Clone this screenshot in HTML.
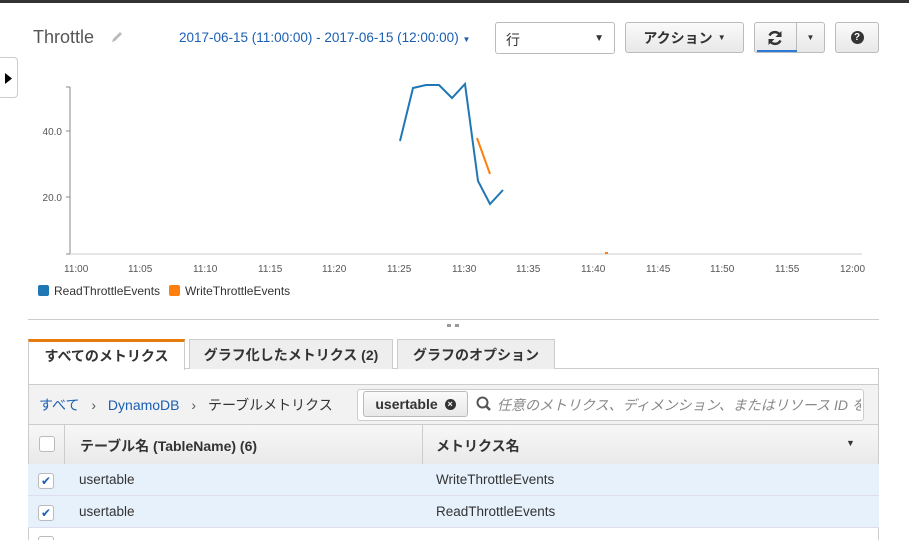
<!DOCTYPE html>
<html style="overflow:hidden;height:540px"><head><meta charset="utf-8"><style>
body{margin:0;width:909px;height:540px;overflow:hidden;background:#fff;font-family:"Liberation Sans","Noto Sans CJK JP",sans-serif;position:relative;color:#333}
.a{position:absolute}
.btn{position:absolute;border:1px solid #bbb;border-radius:3px;background:linear-gradient(#fafafa,#e8e8e8);box-sizing:border-box;font-size:14px;font-weight:bold;color:#333;display:flex;align-items:center;justify-content:center}
.tab{position:absolute;top:339px;height:30px;border:1px solid #ccc;border-bottom:none;background:#eee;box-sizing:border-box;font-size:14px;font-weight:bold;display:flex;align-items:center;justify-content:center;color:#333}
.row{position:absolute;left:28px;width:851px;height:32px;border-bottom:1px solid #dde;box-sizing:border-box;font-size:13.5px}
.cb{position:absolute;left:10px;width:14px;height:14px;border:1px solid #bbb;border-radius:3px;background:#fff}
</style></head><body>
<div class="a" style="left:0;top:0;width:909px;height:3px;background:#333"></div>
<div class="a" style="left:33px;top:27px;font-size:18px;color:#555">Throttle</div>
<svg class="a" style="left:110px;top:30px" width="14" height="14"><path d="M2 12 L3 9 L10 2 L12 4 L5 11 Z" fill="#bbb"/></svg>
<div class="a" style="left:179px;top:30px;font-size:13.5px;color:#1a5fb4">2017-06-15 (11:00:00) - 2017-06-15 (12:00:00) <span style="font-size:8px">▼</span></div>
<div class="a" style="left:495px;top:22px;width:120px;height:32px;border:1px solid #bbb;border-radius:3px;box-sizing:border-box;font-size:14px;padding:7px 10px">行<span style="float:right;font-size:10px;margin-top:3px">▼</span></div>
<div class="btn" style="left:625px;top:22px;width:119px;height:31px">アクション <span style="font-size:8px;margin-left:5px">▼</span></div>
<div class="btn" style="left:754px;top:22px;width:71px;height:31px;justify-content:flex-start"><span style="width:42px;display:flex;justify-content:center"><svg width="18" height="18" viewBox="0 0 18 18"><path d="M14 6 A6 6 0 0 0 3.5 6.5" fill="none" stroke="#333" stroke-width="2.5"/><path d="M15.5 2 L15.5 8 L9.5 8 Z" fill="#333"/><path d="M4 12 A6 6 0 0 0 14.5 11.5" fill="none" stroke="#333" stroke-width="2.5"/><path d="M2.5 16 L2.5 10 L8.5 10 Z" fill="#333"/></svg></span><span style="border-left:1px solid #bbb;height:29px;width:28px;display:flex;align-items:center;justify-content:center;font-size:8px">▼</span></div>
<div class="a" style="left:757px;top:50px;width:40px;height:2px;background:#2a7ad6"></div>
<div class="btn" style="left:835px;top:22px;width:44px;height:31px"><span style="width:13px;height:13px;border-radius:50%;background:#333;color:#fff;font-size:10px;line-height:13px;text-align:center">?</span></div>
<div class="a" style="left:-1px;top:57px;width:19px;height:41px;border:1px solid #ccc;border-radius:0 4px 4px 0;background:#fff;box-sizing:border-box"><svg class="a" style="left:5px;top:15px" width="8" height="11"><path d="M0 0 L7 5.5 L0 11 Z" fill="#000"/></svg></div>
<svg class="a" style="left:0;top:80px" width="909" height="190">
<line x1="70" y1="7" x2="70" y2="174" stroke="#888"/>
<line x1="66" y1="7" x2="70" y2="7" stroke="#888"/>
<line x1="66" y1="51" x2="70" y2="51" stroke="#888"/>
<line x1="66" y1="117" x2="70" y2="117" stroke="#888"/>
<line x1="66" y1="174" x2="70" y2="174" stroke="#888"/>
<line x1="70" y1="174" x2="862" y2="174" stroke="#ccc"/>
<text x="62" y="55" font-size="10" fill="#555" text-anchor="end" font-family="Liberation Sans">40.0</text>
<text x="62" y="121" font-size="10" fill="#555" text-anchor="end" font-family="Liberation Sans">20.0</text>
<polyline fill="none" stroke="#1f77b4" stroke-width="2" points="400,61 413,8 426,5 439,5 452,18 465,4 478,101 490,124 503,110"/>
<polyline fill="none" stroke="#ff7f0e" stroke-width="2" points="477,58 490,94"/>
<line x1="605" y1="173" x2="608" y2="173" stroke="#ff7f0e" stroke-width="2"/>
</svg>
<div class="a" style="left:56px;top:264px;width:810px;font-size:10px;color:#555">
<span class="a" style="left:8px">11:00</span><span class="a" style="left:72px">11:05</span><span class="a" style="left:137px">11:10</span><span class="a" style="left:202px">11:15</span><span class="a" style="left:266px">11:20</span><span class="a" style="left:331px">11:25</span><span class="a" style="left:396px">11:30</span><span class="a" style="left:460px">11:35</span><span class="a" style="left:525px">11:40</span><span class="a" style="left:590px">11:45</span><span class="a" style="left:654px">11:50</span><span class="a" style="left:719px">11:55</span><span class="a" style="left:784px">12:00</span></div>
<div class="a" style="left:38px;top:285px;width:11px;height:11px;background:#1f77b4;border-radius:2px"></div>
<div class="a" style="left:54px;top:284px;font-size:12px">ReadThrottleEvents</div>
<div class="a" style="left:169px;top:285px;width:11px;height:11px;background:#ff7f0e;border-radius:2px"></div>
<div class="a" style="left:185px;top:284px;font-size:12px">WriteThrottleEvents</div>
<div class="a" style="left:28px;top:319px;width:851px;height:1px;background:#ccc"></div>
<div class="a" style="left:447px;top:324px;width:12px;height:3px;border-top:3px dotted #999"></div>
<div class="a" style="left:28px;top:368px;width:851px;height:172px;border:1px solid #ccc;border-bottom:none;box-sizing:border-box"></div>
<div class="tab" style="left:28px;width:157px;background:#fff;border-top:3px solid #e57b0c;height:31px">すべてのメトリクス</div>
<div class="tab" style="left:189px;width:204px">グラフ化したメトリクス (2)</div>
<div class="tab" style="left:397px;width:158px">グラフのオプション</div>
<div class="a" style="left:29px;top:384px;width:849px;height:40px;background:#f2f2f2;border-top:1px solid #ccc"></div>
<div class="a" style="left:39px;top:395px;font-size:14px;color:#1a5fb4">すべて <span style="color:#555;margin:0 8px">›</span> DynamoDB <span style="color:#555;margin:0 8px">›</span> <span style="color:#333">テーブルメトリクス</span></div>
<div class="a" style="left:357px;top:389px;width:505px;height:30px;border:1px solid #ccc;border-radius:3px;background:#fff"></div>
<div class="btn" style="left:363px;top:391px;width:105px;height:26px">usertable <span style="margin-left:7px;width:11px;height:11px;border-radius:50%;background:#333;color:#fff;font-size:9px;line-height:11px;text-align:center">×</span></div>
<svg class="a" style="left:476px;top:396px" width="16" height="16"><circle cx="6.5" cy="6.5" r="5" fill="none" stroke="#555" stroke-width="2"/><path d="M10 10 L14 14" stroke="#555" stroke-width="2.5"/></svg>
<div class="a" style="left:497px;top:395px;font-size:14px;color:#888;font-style:italic;white-space:nowrap;width:364px;overflow:hidden">任意のメトリクス、ディメンション、またはリソース ID を</div>
<div class="a" style="left:29px;top:424px;width:849px;height:39px;background:linear-gradient(#f7f7f7,#e9e9e9);border-bottom:2px solid #ccc;border-top:1px solid #ccc;font-size:14px;font-weight:bold"><div class="cb" style="top:11px"></div><div class="a" style="left:35px;top:0;width:1px;height:39px;background:#ccc"></div><div class="a" style="left:51px;top:11px">テーブル名 (TableName) (6)</div><div class="a" style="left:393px;top:0;width:1px;height:39px;background:#ccc"></div><div class="a" style="left:407px;top:11px">メトリクス名</div><div class="a" style="left:817px;top:13px;font-size:9px">▼</div></div>
<div class="row" style="top:464px;background:#e6f1fb"><div class="cb" style="top:9px;color:#1a5fb4;font-size:12px;line-height:14px;text-align:center">✔</div><span class="a" style="left:51px;top:8px">usertable</span><span class="a" style="left:408px;top:8px">WriteThrottleEvents</span></div>
<div class="row" style="top:496px;background:#e6f1fb"><div class="cb" style="top:9px;color:#1a5fb4;font-size:12px;line-height:14px;text-align:center">✔</div><span class="a" style="left:51px;top:8px">usertable</span><span class="a" style="left:408px;top:8px">ReadThrottleEvents</span></div>
<div class="row" style="top:528px;height:12px;border:none"><div class="cb" style="top:8px"></div></div>
</body></html>
